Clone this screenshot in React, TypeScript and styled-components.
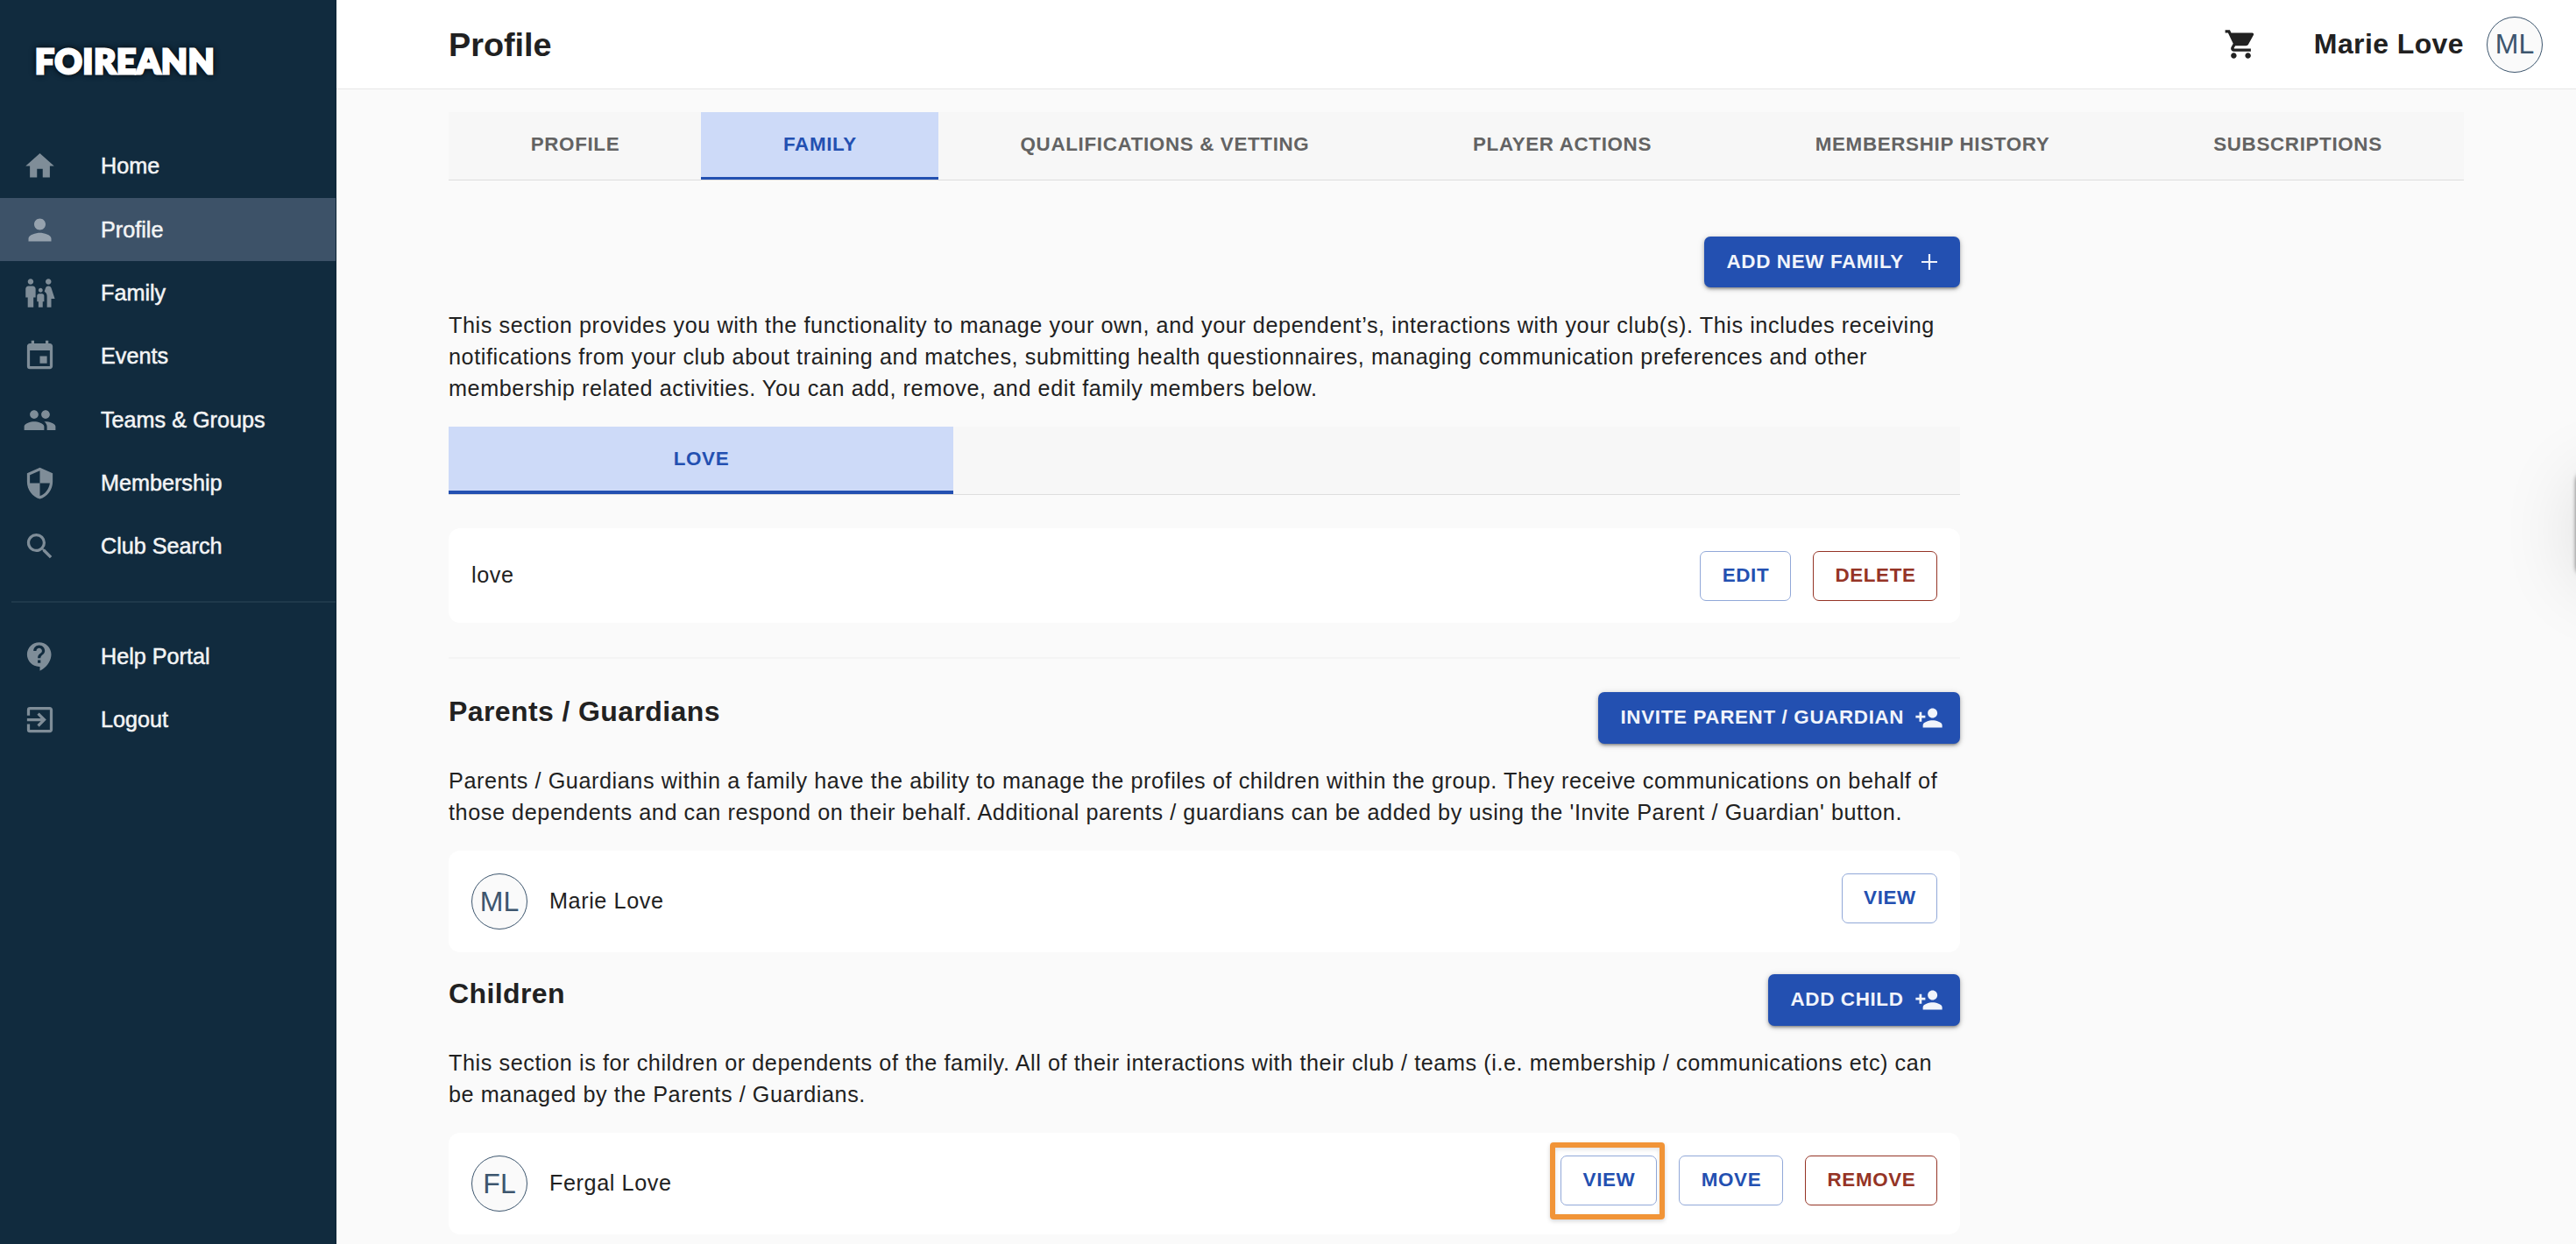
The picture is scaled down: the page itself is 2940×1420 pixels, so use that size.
import React from "react";
import styled, { createGlobalStyle } from "styled-components";
import {
  MdHome,
  MdPerson,
  MdFamilyRestroom,
  MdEvent,
  MdPeople,
  MdSecurity,
  MdSearch,
  MdExitToApp,
  MdShoppingCart,
  MdPersonAdd,
} from "react-icons/md";

const GlobalStyle = createGlobalStyle`
  *, *::before, *::after { box-sizing: border-box; }
  body {
    margin: 0;
    background: #fafafa;
    color: #212121;
    font-family: "Liberation Sans", Arial, sans-serif;
  }
`;

const Page = styled.div`
  position: relative;
  display: flex;
  width: 2940px;
  height: 1420px;
  overflow: hidden;
  background: #fafafa;
`;

const Sidebar = styled.aside`
  display: flex;
  flex-direction: column;
  flex: none;
  width: 384px;
  background: #112b3e;
  border-right: 1px solid #0c2436;
`;

const Logo = styled.div`
  height: 153.8px;
  padding: 43px 0 0 40px;
  font-family: Lato, "Open Sans", sans-serif;
  font-weight: 900;
  font-size: 38.5px;
  line-height: 52px;
  letter-spacing: 0.9px;
  color: #fff;
  -webkit-text-stroke: 3px #fff;
  white-space: nowrap;
  text-shadow: 0 0 6px #000, 0 0 8px rgba(0, 0, 0, 0.8);
`;

const NavList = styled.nav`
  display: flex;
  flex-direction: column;
`;

const NavItem = styled.a<{ $active?: boolean }>`
  display: flex;
  align-items: center;
  gap: 50.5px;
  height: 72.3px;
  padding-left: 25.5px;
  background: ${(p) => (p.$active ? "#3d5268" : "transparent")};
  color: #f3f4f5;
  font-size: 25.2px;
  -webkit-text-stroke: 0.5px #f3f4f5;
  svg {
    flex: none;
    width: 39px;
    height: 39px;
    color: ${(p) => (p.$active ? "#96a2ae" : "#7f8d98")};
    -webkit-text-stroke: 0;
  }
`;

const NavDivider = styled.hr`
  width: 370px;
  height: 2px;
  margin: 26px 0 25px 13px;
  border: 0;
  background: #1f394b;
`;

const Main = styled.div`
  display: flex;
  flex-direction: column;
  flex: 1;
`;

const Header = styled.header`
  display: flex;
  align-items: center;
  height: 102px;
  padding: 0 38px 0 128px;
  background: #fff;
  border-bottom: 1px solid #e6e6e6;
`;

const PageTitle = styled.h1`
  flex: 1;
  margin: 0;
  font-size: 37.8px;
  line-height: 44px;
`;

const UserName = styled.div`
  margin: 0 26px 0 64px;
  font-weight: 700;
  font-size: 32px;
  letter-spacing: 0.4px;
`;

const Avatar = styled.div`
  display: flex;
  align-items: center;
  justify-content: center;
  flex: none;
  width: 64px;
  height: 64px;
  border: 1px solid #3d566e;
  border-radius: 50%;
  background: #fafafa;
  color: #3d566e;
  font-size: 32px;
  letter-spacing: 0;
`;

const Content = styled.main`
  padding: 26px 128px 0;
`;

const TabBar = styled.div<{ $columns: string }>`
  display: grid;
  grid-template-columns: ${(p) => p.$columns};
  height: 78px;
  background: #f7f7f7;
  border-bottom: 1px solid #dedede;
`;

const Tab = styled.div<{ $active?: boolean; $bar?: number }>`
  display: flex;
  align-items: center;
  justify-content: center;
  padding: 0 0 3px 1px;
  font-weight: 700;
  font-size: 22.4px;
  letter-spacing: 0.65px;
  color: ${(p) => (p.$active ? "#2350b1" : "#636363")};
  background: ${(p) => (p.$active ? "#cddaf8" : "transparent")};
  box-shadow: ${(p) => (p.$active ? `inset 0 -${p.$bar ?? 3}px 0 #2350b1` : "none")};
`;

const Column = styled.section<{ $top?: number }>`
  display: flex;
  flex-direction: column;
  width: 1725px;
  margin-top: ${(p) => p.$top ?? 0}px;
`;

const ActionRow = styled.div`
  display: flex;
  justify-content: flex-end;
  margin-top: 64px;
`;

const SectionHead = styled.div<{ $top: number }>`
  display: flex;
  justify-content: space-between;
  align-items: flex-start;
  height: 59px;
  margin-top: ${(p) => p.$top}px;
`;

const SectionTitle = styled.h2`
  margin: 4px 0 0;
  font-size: 32px;
  line-height: 36px;
  letter-spacing: 0.4px;
`;

const Copy = styled.p<{ $top: number }>`
  margin: ${(p) => p.$top}px 0 0;
  font-size: 25.2px;
  line-height: 36px;
  letter-spacing: 0.585px;
  white-space: nowrap;
`;

const PrimaryButton = styled.button<{ $width: number; $height?: number; $icon: number }>`
  display: flex;
  align-items: center;
  justify-content: space-between;
  width: ${(p) => p.$width}px;
  height: ${(p) => p.$height ?? 59}px;
  padding: 0 19px 1px 25.5px;
  border: 0;
  border-radius: 7px;
  background: #2350b1;
  color: #f1f4fb;
  font-family: inherit;
  font-weight: 700;
  font-size: 22.4px;
  letter-spacing: 0.65px;
  white-space: nowrap;
  box-shadow: 0 3px 3px -2px rgba(0, 0, 0, 0.3), 0 2px 4px rgba(0, 0, 0, 0.25), 0 1px 8px rgba(0, 0, 0, 0.12);
  svg {
    flex: none;
    width: ${(p) => p.$icon}px;
    height: ${(p) => p.$icon}px;
  }
`;

const OutlineButton = styled.button<{ $width: number; $danger?: boolean }>`
  display: flex;
  align-items: center;
  justify-content: center;
  width: ${(p) => p.$width}px;
  height: 57px;
  padding: 0 0 1px 1px;
  border: 1px solid ${(p) => (p.$danger ? "#953426" : "#91a8d8")};
  border-radius: 7px;
  background: #fff;
  color: ${(p) => (p.$danger ? "#953426" : "#2350b1")};
  font-family: inherit;
  font-weight: 700;
  font-size: 22.4px;
  letter-spacing: 0.65px;
`;

const Highlighted = styled.div`
  position: relative;
  &::after {
    content: "";
    position: absolute;
    left: -12px;
    top: -15px;
    width: 131px;
    height: 88px;
    border: 6px solid #f19437;
    border-radius: 4px;
    box-shadow: 0 2px 5px rgba(0, 0, 0, 0.16), inset 0 2px 5px rgba(0, 0, 0, 0.12);
  }
`;

const Card = styled.div<{ $top: number; $height: number }>`
  display: flex;
  align-items: flex-start;
  justify-content: space-between;
  height: ${(p) => p.$height}px;
  margin-top: ${(p) => p.$top}px;
  padding: 26px;
  border-radius: 13px;
  background: #fff;
`;

const Member = styled.div`
  display: flex;
  align-items: center;
  gap: 25px;
  font-size: 25.2px;
  letter-spacing: 0.6px;
`;

const MemberName = styled.span`
  padding-bottom: 2px;
  line-height: 54px;
`;

const Actions = styled.div`
  display: flex;
  gap: 25px;
`;

const Rule = styled.hr`
  width: 100%;
  height: 2px;
  margin: 39px 0 0;
  border: 0;
  background: #f4f4f4;
`;

const EdgeHandle = styled.div`
  position: absolute;
  left: 2940px;
  top: 539px;
  width: 120px;
  height: 118px;
  border-radius: 10px;
  box-shadow: 0 0 5px rgba(0, 0, 0, 0.55), 0 8px 88px rgba(0, 0, 0, 0.12);
`;

const HelpIcon = () => (
  <svg viewBox="0 0 24 24" fill="currentColor">
    <path d="M11.5 2C6.81 2 3 5.81 3 10.5S6.81 19 11.5 19h.5v3c4.86-2.34 8-7 8-11.5C20 5.81 16.19 2 11.5 2zm1 14.5h-2v-2h2v2zm0-3.5h-2c0-3.25 3-3 3-5 0-1.1-.9-2-2-2s-2 .9-2 2h-2c0-2.21 1.79-4 4-4s4 1.79 4 4c0 2.5-3 2.75-3 5z" />
  </svg>
);

const PlusIcon = () => (
  <svg viewBox="0 0 32 32" fill="none" stroke="currentColor" strokeWidth="2.2">
    <path d="M16 7v18M7 16h18" />
  </svg>
);

const primaryNav = [
  { label: "Home", Icon: MdHome },
  { label: "Profile", Icon: MdPerson, active: true },
  { label: "Family", Icon: MdFamilyRestroom },
  { label: "Events", Icon: MdEvent },
  { label: "Teams & Groups", Icon: MdPeople },
  { label: "Membership", Icon: MdSecurity },
  { label: "Club Search", Icon: MdSearch },
];

const secondaryNav = [
  { label: "Help Portal", Icon: HelpIcon },
  { label: "Logout", Icon: MdExitToApp },
];

const profileTabs = [
  "PROFILE",
  "FAMILY",
  "QUALIFICATIONS & VETTING",
  "PLAYER ACTIONS",
  "MEMBERSHIP HISTORY",
  "SUBSCRIPTIONS",
];

export default function App() {
  return (
    <Page>
      <GlobalStyle />
      <Sidebar>
        <Logo>FOIREANN</Logo>
        <NavList>
          {primaryNav.map(({ label, Icon, active }) => (
            <NavItem key={label} $active={active}>
              <Icon />
              {label}
            </NavItem>
          ))}
        </NavList>
        <NavDivider />
        <NavList>
          {secondaryNav.map(({ label, Icon }) => (
            <NavItem key={label}>
              <Icon />
              {label}
            </NavItem>
          ))}
        </NavList>
      </Sidebar>

      <Main>
        <Header>
          <PageTitle>Profile</PageTitle>
          <MdShoppingCart size={39} />
          <UserName>Marie Love</UserName>
          <Avatar>ML</Avatar>
        </Header>

        <Content>
          <TabBar $columns="288px 271px 516px 391px 454px 380px">
            {profileTabs.map((tab) => (
              <Tab key={tab} $active={tab === "FAMILY"}>
                {tab}
              </Tab>
            ))}
          </TabBar>

          <Column>
            <ActionRow>
              <PrimaryButton $width={292} $height={58} $icon={32}>
                ADD NEW FAMILY
                <PlusIcon />
              </PrimaryButton>
            </ActionRow>
            <Copy $top={25}>
              This section provides you with the functionality to manage your own, and your dependent’s, interactions
              with your club(s). This includes receiving
              <br />
              notifications from your club about training and matches, submitting health questionnaires, managing
              communication preferences and other
              <br />
              membership related activities. You can add, remove, and edit family members below.
            </Copy>
          </Column>

          <Column $top={26}>
            <TabBar $columns="576px 1fr">
              <Tab $active $bar={4}>
                LOVE
              </Tab>
            </TabBar>
            <Card $top={38} $height={108}>
              <Member>
                <MemberName>love</MemberName>
              </Member>
              <Actions>
                <OutlineButton $width={104}>EDIT</OutlineButton>
                <OutlineButton $width={142} $danger>
                  DELETE
                </OutlineButton>
              </Actions>
            </Card>
            <Rule />

            <SectionHead $top={38}>
              <SectionTitle>Parents / Guardians</SectionTitle>
              <PrimaryButton $width={413} $icon={33}>
                INVITE PARENT / GUARDIAN
                <MdPersonAdd />
              </PrimaryButton>
            </SectionHead>
            <Copy $top={24}>
              Parents / Guardians within a family have the ability to manage the profiles of children within the group.
              They receive communications on behalf of
              <br />
              those dependents and can respond on their behalf. Additional parents / guardians can be added by using the
              'Invite Parent / Guardian' button.
            </Copy>
            <Card $top={26} $height={116}>
              <Member>
                <Avatar>ML</Avatar>
                <MemberName>Marie Love</MemberName>
              </Member>
              <Actions>
                <OutlineButton $width={109}>VIEW</OutlineButton>
              </Actions>
            </Card>

            <SectionHead $top={25}>
              <SectionTitle>Children</SectionTitle>
              <PrimaryButton $width={219} $icon={33}>
                ADD CHILD
                <MdPersonAdd />
              </PrimaryButton>
            </SectionHead>
            <Copy $top={24}>
              This section is for children or dependents of the family. All of their interactions with their club /
              teams (i.e. membership / communications etc) can
              <br />
              be managed by the Parents / Guardians.
            </Copy>
            <Card $top={26} $height={116}>
              <Member>
                <Avatar>FL</Avatar>
                <MemberName>Fergal Love</MemberName>
              </Member>
              <Actions>
                <Highlighted>
                  <OutlineButton $width={110}>VIEW</OutlineButton>
                </Highlighted>
                <OutlineButton $width={119}>MOVE</OutlineButton>
                <OutlineButton $width={151} $danger>
                  REMOVE
                </OutlineButton>
              </Actions>
            </Card>
          </Column>
        </Content>
      </Main>
      <EdgeHandle />
    </Page>
  );
}
